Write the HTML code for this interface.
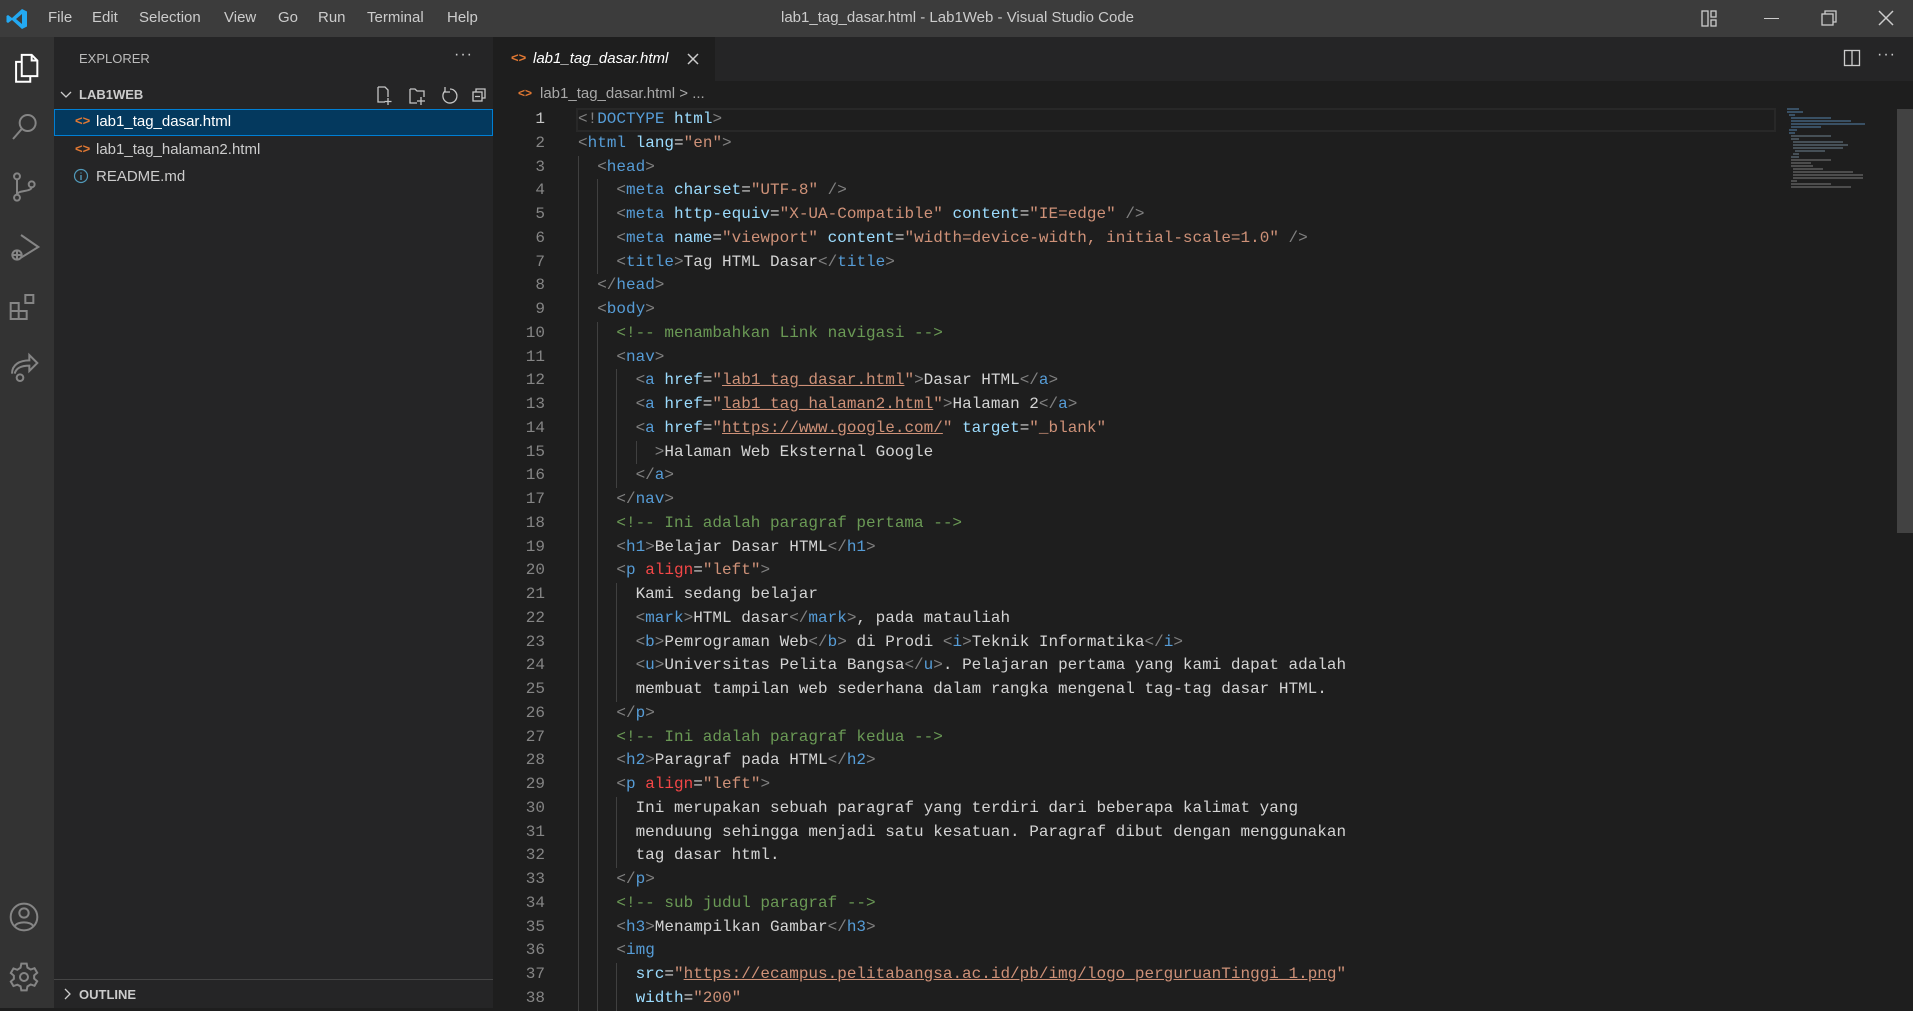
<!DOCTYPE html>
<html><head><meta charset="utf-8">
<style>
*{margin:0;padding:0;box-sizing:border-box}
body{width:1913px;height:1008px;background:#1e1e1e;overflow:hidden;position:relative;font-family:"Liberation Sans",sans-serif;color:#ccc}
.abs{position:absolute}
#title{left:0;top:0;width:1913px;height:37px;background:#3c3c3c}
.menu{position:absolute;top:9px;font-size:15px;color:#ccc}
#act{left:0;top:37px;width:54px;height:971px;background:#333}
#side{left:54px;top:37px;width:439px;height:971px;background:#252526}
#tabs{left:493px;top:37px;width:1420px;height:44px;background:#252526}
#tab{left:493px;top:37px;width:222px;height:44px;background:#1e1e1e}
.code{position:absolute;left:578px;font-family:"Liberation Mono",monospace;font-size:16px;white-space:pre;color:#d4d4d4;line-height:23.75px}
.ln{position:absolute;left:495px;width:50px;text-align:right;font-family:"Liberation Mono",monospace;font-size:16px;color:#858585;line-height:23.75px}
.g{display:inline-block;width:19.2px;height:23.75px;border-left:1px solid #404040;vertical-align:top}
.b{color:#808080}.t{color:#569cd6}.a{color:#9cdcfe}.s{color:#ce9178}.c{color:#6a9955}.r{color:#f44747}.u{text-decoration:underline}
.fi{position:absolute;left:96px;font-size:15px;color:#ccc}
</style></head><body>
<div id="title" class="abs"></div>
<svg class="abs" style="left:5px;top:7px" width="24" height="24" viewBox="0 0 24 24"><path d="M17 2 L22 4.5 V19.5 L17 22 L7 13 L3 16 L1.5 15 V9 L3 8 L7 11 Z M17 7 L11 12 L17 17 Z" fill="#23a9f2"/></svg>
<span class="menu" style="left:48px">File</span>
<span class="menu" style="left:92px">Edit</span>
<span class="menu" style="left:139px">Selection</span>
<span class="menu" style="left:224px">View</span>
<span class="menu" style="left:278px">Go</span>
<span class="menu" style="left:318px">Run</span>
<span class="menu" style="left:367px">Terminal</span>
<span class="menu" style="left:447px">Help</span>
<span class="menu" style="left:781px">lab1_tag_dasar.html - Lab1Web - Visual Studio Code</span>
<svg class="abs" style="left:1700px;top:9px" width="20" height="20"><rect x="2" y="2" width="6" height="15" fill="none" stroke="#ccc" stroke-width="1.3"/><rect x="11" y="2" width="5" height="6" fill="none" stroke="#ccc" stroke-width="1.3"/><rect x="11" y="11" width="5" height="6" fill="none" stroke="#ccc" stroke-width="1.3"/></svg>
<div class="abs" style="left:1764px;top:18px;width:15px;height:1px;background:#ccc"></div>
<svg class="abs" style="left:1820px;top:9px" width="20" height="20"><rect x="2" y="5" width="11" height="11" fill="none" stroke="#ccc" stroke-width="1.3"/><path d="M5 5V2h11v11h-3" fill="none" stroke="#ccc" stroke-width="1.3"/></svg>
<svg class="abs" style="left:1877px;top:9px" width="18" height="18"><path d="M2 2L16 16M16 2L2 16" stroke="#ccc" stroke-width="1.5"/></svg>

<div id="act" class="abs"></div>
<svg class="abs" style="left:9px;top:52px" width="34" height="34" viewBox="0 0 24 24" fill="none" stroke="#fff" stroke-width="1.4"><path d="M9 2h7l4 4v11H9z M16 2v4h4"/><path d="M9 7H5v14h10v-4"/></svg>
<svg class="abs" style="left:9px;top:111px" width="32" height="32" viewBox="0 0 24 24" fill="none" stroke="#858585" stroke-width="1.5"><circle cx="14" cy="9" r="6"/><path d="M10 13L3 21"/></svg>
<svg class="abs" style="left:9px;top:171px" width="32" height="32" viewBox="0 0 24 24" fill="none" stroke="#858585" stroke-width="1.5"><circle cx="6" cy="4" r="2.2"/><circle cx="6" cy="20" r="2.2"/><circle cx="17" cy="10" r="2.2"/><path d="M6 6v12M17 12c0 4-11 2-11 6"/></svg>
<svg class="abs" style="left:9px;top:231px" width="32" height="32" viewBox="0 0 24 24" fill="none" stroke="#858585" stroke-width="1.5"><path d="M9 3l13 9-13 8"/><circle cx="6" cy="18" r="3.5"/><path d="M2 18h8M6 14v8"/></svg>
<svg class="abs" style="left:8px;top:291px" width="32" height="32" viewBox="0 0 24 24" fill="none" stroke="#858585" stroke-width="1.5"><path d="M2 9h6v6H2zM2 15h6v6H2zM8 15h6v6H8z"/><rect x="13" y="3" width="6" height="6"/></svg>
<svg class="abs" style="left:8px;top:351px" width="32" height="32" viewBox="0 0 24 24" fill="none" stroke="#858585" stroke-width="1.5"><path d="M3 17c0-7 6-10 13-10V3l6 6-6 6v-4c-6 0-10 2-11 6"/><circle cx="9" cy="20" r="2.5"/></svg>
<svg class="abs" style="left:8px;top:901px" width="32" height="32" viewBox="0 0 24 24" fill="none" stroke="#858585" stroke-width="1.5"><circle cx="12" cy="12" r="10"/><circle cx="12" cy="9" r="3.5"/><path d="M5 19c2-4 12-4 14 0"/></svg>
<svg class="abs" style="left:8px;top:961px" width="32" height="32" viewBox="0 0 24 24" fill="none" stroke="#858585" stroke-width="1.5"><circle cx="12" cy="12" r="3"/><path d="M10 2h4l.6 3 2.4 1.4 2.9-1 2 3.4-2.3 2v2.4l2.3 2-2 3.4-2.9-1-2.4 1.4-.6 3h-4l-.6-3L7 17.8l-2.9 1-2-3.4 2.3-2v-2.4l-2.3-2 2-3.4 2.9 1L9.4 5z"/></svg>

<div id="side" class="abs"></div>
<span class="abs" style="left:79px;top:51px;font-size:13px;color:#bbb">EXPLORER</span>
<span class="abs" style="left:454px;top:46px;font-size:16px;color:#ccc;letter-spacing:1px">···</span>
<svg class="abs" style="left:59px;top:88px" width="14" height="14"><path d="M2 4l5 5 5-5" stroke="#ccc" fill="none" stroke-width="1.3"/></svg>
<span class="abs" style="left:79px;top:87px;font-size:13px;font-weight:bold;color:#ccc">LAB1WEB</span>
<svg class="abs" style="left:375px;top:84px" width="112" height="22" fill="none" stroke="#c5c5c5" stroke-width="1.3"><path d="M3 3h7l3 3v7M3 3v15h7M13 14v7M9.5 17.5h7"/><path d="M35 5h5l2 2h7v6M35 5v14h7M46 13v8M42 17h8"/><path d="M75 5a7 7 0 1 1-5 2M70 3v5h5"/><rect x="98" y="8" width="9" height="9"/><path d="M101 8V5h9v9h-3M100 12.5h5"/></svg>
<div class="abs" style="left:54px;top:109px;width:439px;height:27px;background:#04395e;border:1px solid #007fd4"></div>
<span class="abs" style="left:75px;top:113px;font-size:13px;color:#e37933;font-weight:bold">&lt;&gt;</span>
<span class="fi" style="top:113px;color:#fff">lab1_tag_dasar.html</span>
<span class="abs" style="left:75px;top:141px;font-size:13px;color:#e37933;font-weight:bold">&lt;&gt;</span>
<span class="fi" style="top:141px">lab1_tag_halaman2.html</span>
<svg class="abs" style="left:73px;top:168px" width="16" height="16"><circle cx="8" cy="8" r="6.5" fill="none" stroke="#519aba" stroke-width="1.2"/><path d="M8 7v5M8 4.5v1" stroke="#519aba" stroke-width="1.4"/></svg>
<span class="fi" style="top:168px">README.md</span>
<div class="abs" style="left:54px;top:979px;width:439px;height:1px;background:#454545"></div>
<svg class="abs" style="left:62px;top:987px" width="12" height="14"><path d="M3 2l5 5-5 5" stroke="#ccc" fill="none" stroke-width="1.3"/></svg>
<span class="abs" style="left:79px;top:987px;font-size:13px;font-weight:bold;color:#ccc">OUTLINE</span>

<div id="tabs" class="abs"></div>
<div id="tab" class="abs"></div>
<span class="abs" style="left:511px;top:50px;font-size:13px;color:#e37933;font-weight:bold">&lt;&gt;</span>
<span class="abs" style="left:533px;top:50px;font-size:15px;color:#fff;font-style:italic">lab1_tag_dasar.html</span>
<svg class="abs" style="left:686px;top:52px" width="14" height="14"><path d="M2 2l10 10M12 2L2 12" stroke="#ccc" stroke-width="1.5"/></svg>
<svg class="abs" style="left:1843px;top:49px" width="18" height="18"><rect x="1.5" y="1.5" width="15" height="15" fill="none" stroke="#ccc" stroke-width="1.3"/><path d="M9 1.5v15" stroke="#ccc" stroke-width="1.3"/></svg>
<span class="abs" style="left:1877px;top:46px;font-size:16px;color:#ccc;letter-spacing:1px">···</span>
<span class="abs" style="left:518px;top:86px;font-size:12px;color:#e37933;font-weight:bold">&lt;&gt;</span>
<span class="abs" style="left:540px;top:85px;font-size:15px;color:#a9a9a9">lab1_tag_dasar.html &gt; ...</span>

<div class="abs" style="left:576px;top:108px;width:1200px;height:24px;border:2px solid #282828"></div>

<div class="ln" style="top:108px"><span style="color:#c6c6c6">1</span><br>2<br>3<br>4<br>5<br>6<br>7<br>8<br>9<br>10<br>11<br>12<br>13<br>14<br>15<br>16<br>17<br>18<br>19<br>20<br>21<br>22<br>23<br>24<br>25<br>26<br>27<br>28<br>29<br>30<br>31<br>32<br>33<br>34<br>35<br>36<br>37<br>38</div>

<div class="code" style="top:108px"><div><span class="b">&lt;!</span><span class="t">DOCTYPE</span> <span class="a">html</span><span class="b">&gt;</span></div><div><span class="b">&lt;</span><span class="t">html</span> <span class="a">lang</span>=<span class="s">"en"</span><span class="b">&gt;</span></div><div><span class="g"></span><span class="b">&lt;</span><span class="t">head</span><span class="b">&gt;</span></div><div><span class="g"></span><span class="g"></span><span class="b">&lt;</span><span class="t">meta</span> <span class="a">charset</span>=<span class="s">"UTF-8"</span> <span class="b">/&gt;</span></div><div><span class="g"></span><span class="g"></span><span class="b">&lt;</span><span class="t">meta</span> <span class="a">http-equiv</span>=<span class="s">"X-UA-Compatible"</span> <span class="a">content</span>=<span class="s">"IE=edge"</span> <span class="b">/&gt;</span></div><div><span class="g"></span><span class="g"></span><span class="b">&lt;</span><span class="t">meta</span> <span class="a">name</span>=<span class="s">"viewport"</span> <span class="a">content</span>=<span class="s">"width=device-width, initial-scale=1.0"</span> <span class="b">/&gt;</span></div><div><span class="g"></span><span class="g"></span><span class="b">&lt;</span><span class="t">title</span><span class="b">&gt;</span>Tag HTML Dasar<span class="b">&lt;/</span><span class="t">title</span><span class="b">&gt;</span></div><div><span class="g"></span><span class="b">&lt;/</span><span class="t">head</span><span class="b">&gt;</span></div><div><span class="g"></span><span class="b">&lt;</span><span class="t">body</span><span class="b">&gt;</span></div><div><span class="g"></span><span class="g"></span><span class="c">&lt;!-- menambahkan Link navigasi --&gt;</span></div><div><span class="g"></span><span class="g"></span><span class="b">&lt;</span><span class="t">nav</span><span class="b">&gt;</span></div><div><span class="g"></span><span class="g"></span><span class="g"></span><span class="b">&lt;</span><span class="t">a</span> <span class="a">href</span>=<span class="s">"<span class="u">lab1_tag_dasar.html</span>"</span><span class="b">&gt;</span>Dasar HTML<span class="b">&lt;/</span><span class="t">a</span><span class="b">&gt;</span></div><div><span class="g"></span><span class="g"></span><span class="g"></span><span class="b">&lt;</span><span class="t">a</span> <span class="a">href</span>=<span class="s">"<span class="u">lab1_tag_halaman2.html</span>"</span><span class="b">&gt;</span>Halaman 2<span class="b">&lt;/</span><span class="t">a</span><span class="b">&gt;</span></div><div><span class="g"></span><span class="g"></span><span class="g"></span><span class="b">&lt;</span><span class="t">a</span> <span class="a">href</span>=<span class="s">"<span class="u">https://www.google.com/</span>"</span> <span class="a">target</span>=<span class="s">"_blank"</span></div><div><span class="g"></span><span class="g"></span><span class="g"></span><span class="g"></span><span class="b">&gt;</span>Halaman Web Eksternal Google</div><div><span class="g"></span><span class="g"></span><span class="g"></span><span class="b">&lt;/</span><span class="t">a</span><span class="b">&gt;</span></div><div><span class="g"></span><span class="g"></span><span class="b">&lt;/</span><span class="t">nav</span><span class="b">&gt;</span></div><div><span class="g"></span><span class="g"></span><span class="c">&lt;!-- Ini adalah paragraf pertama --&gt;</span></div><div><span class="g"></span><span class="g"></span><span class="b">&lt;</span><span class="t">h1</span><span class="b">&gt;</span>Belajar Dasar HTML<span class="b">&lt;/</span><span class="t">h1</span><span class="b">&gt;</span></div><div><span class="g"></span><span class="g"></span><span class="b">&lt;</span><span class="t">p</span> <span class="r">align</span>=<span class="s">"left"</span><span class="b">&gt;</span></div><div><span class="g"></span><span class="g"></span><span class="g"></span>Kami sedang belajar</div><div><span class="g"></span><span class="g"></span><span class="g"></span><span class="b">&lt;</span><span class="t">mark</span><span class="b">&gt;</span>HTML dasar<span class="b">&lt;/</span><span class="t">mark</span><span class="b">&gt;</span>, pada matauliah</div><div><span class="g"></span><span class="g"></span><span class="g"></span><span class="b">&lt;</span><span class="t">b</span><span class="b">&gt;</span>Pemrograman Web<span class="b">&lt;/</span><span class="t">b</span><span class="b">&gt;</span> di Prodi <span class="b">&lt;</span><span class="t">i</span><span class="b">&gt;</span>Teknik Informatika<span class="b">&lt;/</span><span class="t">i</span><span class="b">&gt;</span></div><div><span class="g"></span><span class="g"></span><span class="g"></span><span class="b">&lt;</span><span class="t">u</span><span class="b">&gt;</span>Universitas Pelita Bangsa<span class="b">&lt;/</span><span class="t">u</span><span class="b">&gt;</span>. Pelajaran pertama yang kami dapat adalah</div><div><span class="g"></span><span class="g"></span><span class="g"></span>membuat tampilan web sederhana dalam rangka mengenal tag-tag dasar HTML.</div><div><span class="g"></span><span class="g"></span><span class="b">&lt;/</span><span class="t">p</span><span class="b">&gt;</span></div><div><span class="g"></span><span class="g"></span><span class="c">&lt;!-- Ini adalah paragraf kedua --&gt;</span></div><div><span class="g"></span><span class="g"></span><span class="b">&lt;</span><span class="t">h2</span><span class="b">&gt;</span>Paragraf pada HTML<span class="b">&lt;/</span><span class="t">h2</span><span class="b">&gt;</span></div><div><span class="g"></span><span class="g"></span><span class="b">&lt;</span><span class="t">p</span> <span class="r">align</span>=<span class="s">"left"</span><span class="b">&gt;</span></div><div><span class="g"></span><span class="g"></span><span class="g"></span>Ini merupakan sebuah paragraf yang terdiri dari beberapa kalimat yang</div><div><span class="g"></span><span class="g"></span><span class="g"></span>menduung sehingga menjadi satu kesatuan. Paragraf dibut dengan menggunakan</div><div><span class="g"></span><span class="g"></span><span class="g"></span>tag dasar html.</div><div><span class="g"></span><span class="g"></span><span class="b">&lt;/</span><span class="t">p</span><span class="b">&gt;</span></div><div><span class="g"></span><span class="g"></span><span class="c">&lt;!-- sub judul paragraf --&gt;</span></div><div><span class="g"></span><span class="g"></span><span class="b">&lt;</span><span class="t">h3</span><span class="b">&gt;</span>Menampilkan Gambar<span class="b">&lt;/</span><span class="t">h3</span><span class="b">&gt;</span></div><div><span class="g"></span><span class="g"></span><span class="b">&lt;</span><span class="t">img</span></div><div><span class="g"></span><span class="g"></span><span class="g"></span><span class="a">src</span>=<span class="s">"<span class="u">https://ecampus.pelitabangsa.ac.id/pb/img/logo_perguruanTinggi_1.png</span>"</span></div><div><span class="g"></span><span class="g"></span><span class="g"></span><span class="a">width</span>=<span class="s">"200"</span></div></div>

<svg class="abs" style="left:1785px;top:108px" width="80" height="85">
<g stroke-width="1.2">
<path d="M2 1h12M2 4h16M4 7h6M6 10h40M6 13h60M6 16h80M6 19h30M4 22h8M4 25h6" stroke="#4a6f8f"/>
<path d="M6 28h40M6 31h8M8 34h50M8 37h55M8 40h50M10 43h30M8 46h6M6 49h8" stroke="#5f6e7a"/>
<path d="M6 52h40M6 55h20M6 58h22M8 61h30M8 64h60M8 67h70M8 70h70M6 73h6M6 76h40M6 79h60" stroke="#6a6a6a"/>
</g></svg>
<div class="abs" style="left:1897px;top:109px;width:16px;height:424px;background:#424242"></div>
</body></html>
